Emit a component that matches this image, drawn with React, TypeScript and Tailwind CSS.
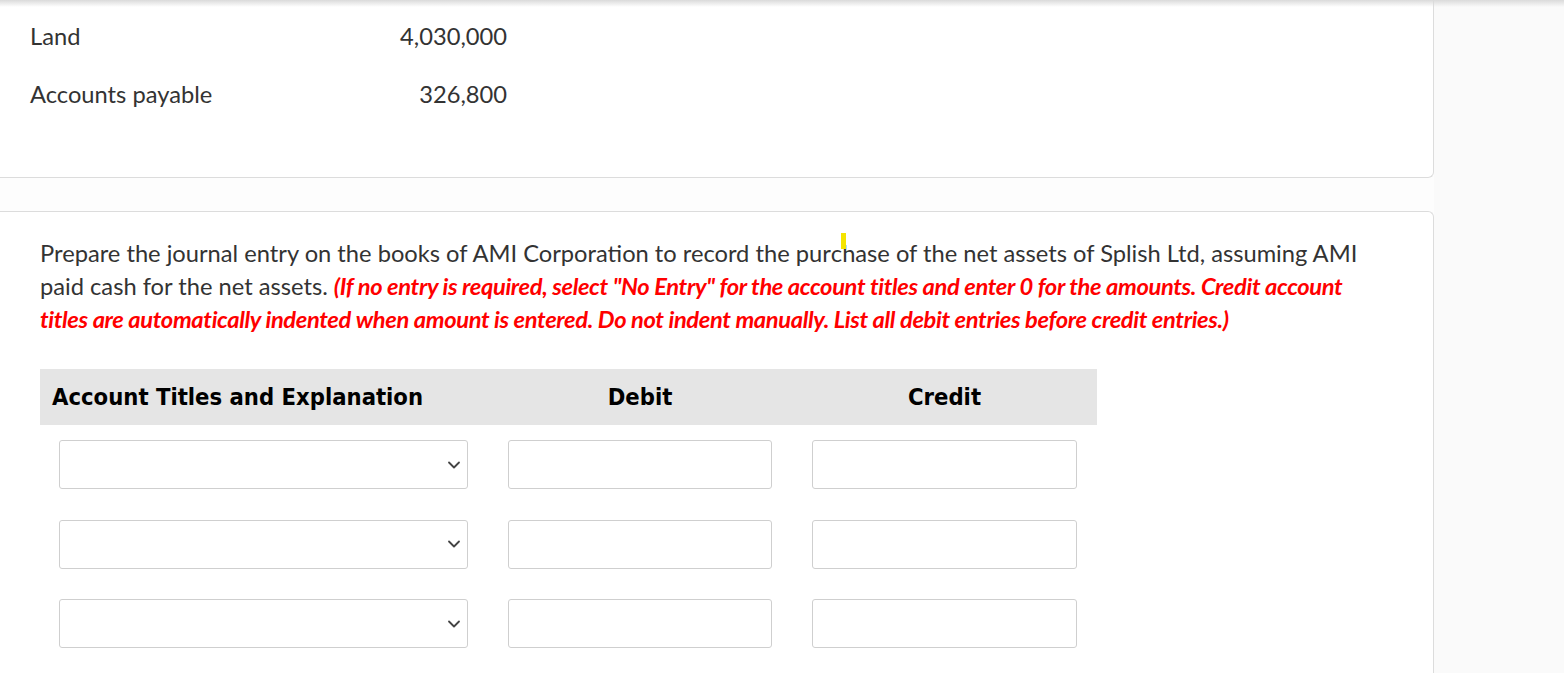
import { ChevronDown } from 'lucide-react';

const rows = [0, 1, 2];

export default function App() {
  return (
    <div className="relative flex min-h-[673px] bg-white font-['Lato',sans-serif] text-[#333]">
      <div className="pointer-events-none absolute inset-x-0 top-0 h-[7px] bg-gradient-to-b from-[#dadada] to-transparent" />
      <div className="w-[1434px] shrink-0 bg-[#fdfdfd]">
        <div className="h-[178px] rounded-br-md border-r border-b border-[#dcdcdc] bg-white pl-[30px] pt-[22px] text-[23.7px]">
          <div className="flex h-[30px] items-center">
            <span className="w-[300px]">Land</span>
            <span className="w-[177px] text-right">4,030,000</span>
          </div>
          <div className="mt-[28px] flex h-[30px] items-center">
            <span className="w-[300px]">Accounts payable</span>
            <span className="w-[177px] text-right">326,800</span>
          </div>
        </div>
        <div className="mt-[33px] rounded-tr-md border-t border-r border-[#dcdcdc] bg-white px-[40px] pt-[25px] pb-[24px]">
          <p className="relative text-[23.7px] leading-[33px]">
            Prepare the journal entry on the books of AMI Corporation to record the pur
            <span className="relative">
              <span className="absolute left-[10px] top-[-6px] h-[16px] w-[5px] bg-[#f5e400]" />
              c
            </span>
            hase of the net assets of Splish Ltd, assuming AMI paid cash for the net assets.{' '}
            <span className="font-bold italic tracking-[-0.015em] text-[#f00]">
              (If no entry is required, select "No Entry" for the account titles and enter 0 for the amounts. Credit account titles are automatically indented when amount is entered. Do not indent manually. List all debit entries before credit entries.)
            </span>
          </p>
          <div className="mt-[33px] w-[1057px]">
            <div className="grid h-[56px] grid-cols-[448px_304px_305px] items-center bg-[#e5e5e5] pt-[2px] font-['DejaVu_Sans_Condensed','DejaVu_Sans',sans-serif] text-[23.6px] font-bold font-stretch-condensed text-black">
              <span className="pl-[12px]">Account Titles and Explanation</span>
              <span className="text-center">Debit</span>
              <span className="text-center">Credit</span>
            </div>
            {rows.map((r) => (
              <div key={r} className="grid grid-cols-[448px_304px_305px] pt-[15px] pb-[15.5px]">
                <div className="pl-[19px] pr-[20px]">
                  <div className="flex h-[49px] items-center justify-end rounded-[3px] border border-[#cfcfcf] bg-white pr-[3px]">
                    <ChevronDown className="h-[20px] w-[20px] text-[#444]" strokeWidth={2.2} />
                  </div>
                </div>
                <div className="px-[20px]">
                  <div className="h-[49px] rounded-[3px] border border-[#cfcfcf] bg-white" />
                </div>
                <div className="px-[20px]">
                  <div className="h-[49px] rounded-[3px] border border-[#cfcfcf] bg-white" />
                </div>
              </div>
            ))}
          </div>
        </div>
      </div>
      <div className="flex-1 bg-[#fafafa]" />
    </div>
  );
}
